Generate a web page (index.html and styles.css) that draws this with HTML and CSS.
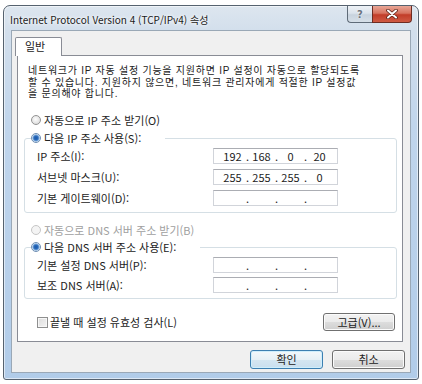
FILE: index.html
```html
<!DOCTYPE html>
<html lang="ko">
<head>
    <meta charset="UTF-8">
    <meta name="viewport" content="width=device-width, initial-scale=1.0">
    <title>Internet Protocol Version 4 (TCP/IPv4) 속성</title>
    <link rel="stylesheet" href="styles.css">
</head>
<body>
    <div class="window">
        <div class="titlebar">
            <span class="title">Internet Protocol Version 4 (TCP/IPv4) 속성</span>
            <div class="caption-buttons">
                <div class="cap-btn help"><span>?</span></div>
                <div class="cap-btn close">
                    <svg width="12" height="10" viewBox="0 0 12 10">
                        <path d="M2 1.5 L10 8.5 M10 1.5 L2 8.5" stroke="#5b2318" stroke-width="3.6" stroke-linecap="round"/>
                        <path d="M2 1.5 L10 8.5 M10 1.5 L2 8.5" stroke="#fff" stroke-width="2" stroke-linecap="round"/>
                    </svg>
                </div>
            </div>
        </div>

        <div class="client">
            <div class="tabs">
                <div class="tab">일반</div>
            </div>
            <div class="panel">
                <div class="desc">
                    <div>네트워크가 IP 자동 설정 기능을 지원하면 IP 설정이 자동으로 할당되도록</div>
                    <div>할 수 있습니다. 지원하지 않으면, 네트워크 관리자에게 적절한 IP 설정값</div>
                    <div>을 문의해야 합니다.</div>
                </div>

                <div class="option"><span class="radio"></span>자동으로 IP 주소 받기(O)</div>
                <fieldset class="group">
                    <legend class="option"><span class="radio checked"></span>다음 IP 주소 사용(S):</legend>
                    <div class="field">
                        <span>IP 주소(I):</span>
                        <div class="ip"><span>192</span><i>.</i><span>168</span><i>.</i><span>0</span><i>.</i><span>20</span></div>
                    </div>
                    <div class="field">
                        <span>서브넷 마스크(U):</span>
                        <div class="ip"><span>255</span><i>.</i><span>255</span><i>.</i><span>255</span><i>.</i><span>0</span></div>
                    </div>
                    <div class="field">
                        <span>기본 게이트웨이(D):</span>
                        <div class="ip"><span></span><i>.</i><span></span><i>.</i><span></span><i>.</i><span></span></div>
                    </div>
                </fieldset>

                <div class="option disabled"><span class="radio"></span>자동으로 DNS 서버 주소 받기(B)</div>
                <fieldset class="group dns">
                    <legend class="option"><span class="radio checked"></span>다음 DNS 서버 주소 사용(E):</legend>
                    <div class="field">
                        <span>기본 설정 DNS 서버(P):</span>
                        <div class="ip"><span></span><i>.</i><span></span><i>.</i><span></span><i>.</i><span></span></div>
                    </div>
                    <div class="field">
                        <span>보조 DNS 서버(A):</span>
                        <div class="ip"><span></span><i>.</i><span></span><i>.</i><span></span><i>.</i><span></span></div>
                    </div>
                </fieldset>

                <div class="bottom-row">
                    <div class="check-option"><span class="checkbox"></span>끝낼 때 설정 유효성 검사(L)</div>
                    <div class="btn advanced">고급(V)...</div>
                </div>
            </div>

            <div class="dialog-buttons">
                <div class="btn default">확인</div>
                <div class="btn">취소</div>
            </div>
        </div>
    </div>
</body>
</html>
```

FILE: styles.css
```css
* {
    box-sizing: border-box;
}

body {
    margin: 0;
    background: #fff;
    font-family: "Noto Sans CJK KR", "Noto Sans", sans-serif;
    font-size: 11px;
    color: #222;
}

/* Aero window frame */
.window {
    display: flex;
    flex-direction: column;
    width: 416px;
    height: 375px;
    margin: 5px 3px 0 3px;
    border: 1px solid #56626f;
    border-radius: 7px 7px 3px 3px;
    background: linear-gradient(to bottom, #dde6ef 0, #d3dfec 24px, #c0d5ec 120px, #b1cce9 100%);
    box-shadow: inset 0 0 0 1px rgba(255, 255, 255, 0.55);
}

.titlebar {
    display: flex;
    justify-content: space-between;
    align-items: flex-start;
    height: 24px;
    padding-left: 6px;
}

.title {
    margin-top: 7px;
    font-size: 10px;
    line-height: 14px;
    color: #1b1b1b;
    text-shadow: 0 0 5px #fff, 0 0 3px #fff;
}

.caption-buttons {
    display: flex;
    margin-right: 6px;
}

.cap-btn {
    display: flex;
    justify-content: center;
    align-items: center;
    height: 17px;
    border: 1px solid #5f6b78;
    border-top: none;
}

.help {
    width: 25px;
    border-right: none;
    border-radius: 0 0 0 4px;
    background: linear-gradient(to bottom, #eef2f6 0, #dbe3ec 45%, #c8d3de 55%, #d6dfe8 100%);
}

.help span {
    font-family: "DejaVu Sans", sans-serif;
    font-size: 10px;
    font-weight: bold;
    color: #6b7480;
    text-shadow: 0 0 2px #fff;
}

.close {
    width: 40px;
    border-color: #6e2c22;
    border-radius: 0 0 4px 0;
    background: linear-gradient(to bottom, #e9a797 0, #d7735f 45%, #c23d29 55%, #cf5a43 100%);
}

/* client area */
.client {
    flex: 1;
    display: flex;
    flex-direction: column;
    margin: 0 7px 6px 7px;
    padding: 6px 5px 0 5px;
    border: 1px solid #9aa8b6;
    background: #f0f0f0;
}

.tabs {
    display: flex;
}

.tab {
    position: relative;
    z-index: 1;
    width: 47px;
    height: 19px;
    margin-left: -2px;
    margin-bottom: -1px;
    padding-left: 9px;
    border: 1px solid #898c95;
    border-bottom: none;
    border-radius: 2px 2px 0 0;
    background: #fff;
    line-height: 17px;
}

.panel {
    display: flex;
    flex-direction: column;
    height: 287px;
    margin-right: 2px;
    padding: 9px 5px 0 6px;
    border: 1px solid #898c95;
    background: #fff;
}

.desc {
    margin-left: 4px;
    font-family: "Liberation Sans", "Noto Sans CJK KR", sans-serif;
    font-size: 10px;
    letter-spacing: 0.75px;
    line-height: 11.5px;
    white-space: nowrap;
}

.option {
    display: flex;
    align-items: center;
    height: 14px;
    line-height: 14px;
    white-space: nowrap;
}

.panel > .option {
    margin: 13.5px 0 0 7px;
}

.panel > .option.disabled {
    margin-top: 10px;
    color: #a0a0a0;
}

.radio {
    flex: none;
    width: 10px;
    height: 10px;
    margin-right: 3px;
    border: 1px solid #939393;
    border-radius: 50%;
    background: radial-gradient(circle at 45% 40%, #fdfdfd 0, #e4e4e4 60%, #cfcfcf 100%);
}

.radio.checked {
    border-color: #6f8fb3;
    background: radial-gradient(circle, #1a58a6 0, #2a6bbd 2px, #8eb7e2 3.3px, #eef3f9 4px);
}

.disabled .radio {
    border-color: #c6c6c6;
    background: #f4f4f4;
}

/* group boxes */
.group {
    min-width: 0;
    margin: 4px 0 0 0;
    padding: 3px 0 6px 6px;
    border: 1px solid #d5dfe5;
    border-radius: 3px;
}

.group.dns {
    margin-top: 3px;
    padding-bottom: 5px;
}

.group legend {
    padding: 0 24px 0 0;
}

.field {
    display: grid;
    grid-template-columns: 176px 125px;
    align-items: center;
    height: 16px;
    padding-left: 6px;
    white-space: nowrap;
}

.field + .field {
    margin-top: 5px;
}

.dns .field + .field {
    margin-top: 4px;
}

.ip {
    display: flex;
    height: 16px;
    padding-left: 5px;
    border: 1px solid #d1d4da;
    border-top-color: #abadb3;
    background: #fff;
    line-height: 14px;
}

.ip span {
    width: 27px;
    text-align: center;
}

.ip i {
    width: 2px;
    font-style: normal;
    text-align: center;
}

/* bottom of the tab */
.bottom-row {
    display: flex;
    justify-content: space-between;
    align-items: center;
    height: 18px;
    margin: 14px 2px 0 13px;
}

.check-option {
    display: flex;
    align-items: center;
    white-space: nowrap;
}

.checkbox {
    width: 11px;
    height: 11px;
    margin-right: 2px;
    border: 1px solid #8e8f8f;
    background: linear-gradient(135deg, #dcdcdc 0, #f4f4f4 100%);
    box-shadow: inset 0 0 0 1px #f7f7f7;
}

.btn {
    width: 73px;
    height: 19px;
    border: 1px solid #707070;
    border-radius: 3px;
    background: linear-gradient(to bottom, #f2f2f2 0, #ebebeb 50%, #dddddd 51%, #cfcfcf 100%);
    box-shadow: inset 0 0 0 1px #fbfbfb;
    text-align: center;
    line-height: 17px;
}

.btn.advanced {
    width: 72px;
    height: 18px;
    line-height: 16px;
}

.btn.default {
    border-color: #3c7fb1;
    background: linear-gradient(to bottom, #f3f8fb 0, #e6f0f6 50%, #d5e6f1 51%, #c9dfee 100%);
    box-shadow: inset 0 0 0 1px #cfeefc;
}

.dialog-buttons {
    display: flex;
    justify-content: flex-end;
    gap: 9px;
    margin-top: 8px;
}
```
